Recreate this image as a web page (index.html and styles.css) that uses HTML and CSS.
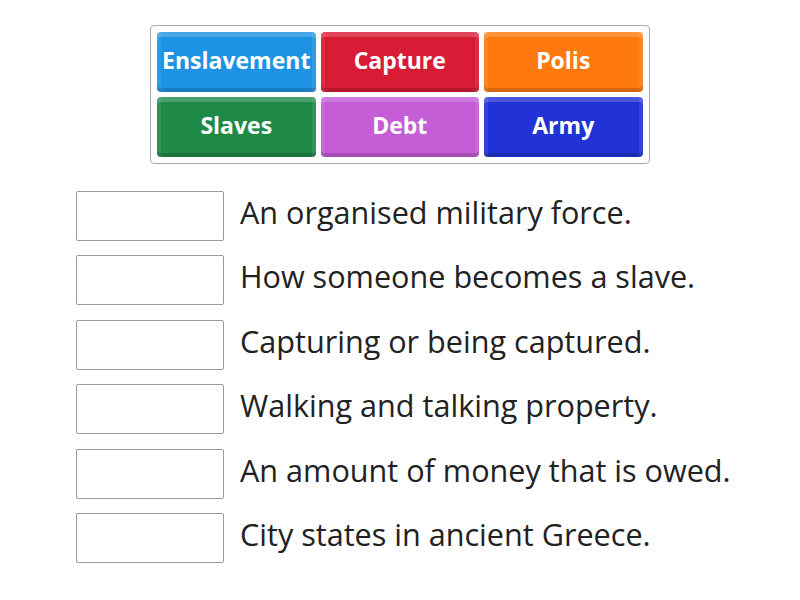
FILE: index.html
```html
<!DOCTYPE html>
<html>
<head>
  <title>Match up</title>
  <link rel="stylesheet" href="styles.css">
</head>
<body>
  <div class="bank">
    <div class="tile blue">Enslavement</div>
    <div class="tile red">Capture</div>
    <div class="tile orange">Polis</div>
    <div class="tile green">Slaves</div>
    <div class="tile pink">Debt</div>
    <div class="tile navy">Army</div>
  </div>

  <div class="rows">
    <div class="row"><div class="slot"></div><span class="def">An organised military force.</span></div>
    <div class="row"><div class="slot"></div><span class="def">How someone becomes a slave.</span></div>
    <div class="row"><div class="slot"></div><span class="def">Capturing or being captured.</span></div>
    <div class="row"><div class="slot"></div><span class="def">Walking and talking property.</span></div>
    <div class="row"><div class="slot"></div><span class="def">An amount of money that is owed.</span></div>
    <div class="row"><div class="slot"></div><span class="def">City states in ancient Greece.</span></div>
  </div>
</body>
</html>
```

FILE: styles.css
```css
body { margin: 0; background: #fff; font-family: "Open Sans", sans-serif; color: #222; }

.bank { width: 486px; margin: 25px 0 0 150px; padding: 6px; border: 1px solid #aaa; border-radius: 4px;
  display: grid; grid-template-columns: repeat(3, 158.5px); grid-auto-rows: 60px; gap: 5px 5px; }
.tile { display: flex; align-items: center; justify-content: center; border-radius: 4px; padding-bottom: 4px;
  color: #fff; font-weight: 700; font-size: 23px;
  box-shadow: inset 0 5px 0 rgba(255,255,255,0.18), inset 0 -4px 0 rgba(0,0,0,0.15), inset 4px 0 0 rgba(255,255,255,0.08), inset -4px 0 0 rgba(255,255,255,0.08); }
.blue { background: #1f93e3; }
.red { background: #d81c35; }
.orange { background: #fe7a0f; }
.green { background: #1f8a48; }
.pink { background: #c55dd6; }
.navy { background: #2133d6; }

.rows { margin: 27px 0 0 76px; display: flex; flex-direction: column; gap: 14.4px; }
.row { display: flex; align-items: center; height: 50px; }
.slot { width: 146px; height: 48px; border: 1px solid #999; border-radius: 2px; flex: none; }
.def { margin-left: 16px; font-size: 30.6px; margin-top: -8px; }
```
